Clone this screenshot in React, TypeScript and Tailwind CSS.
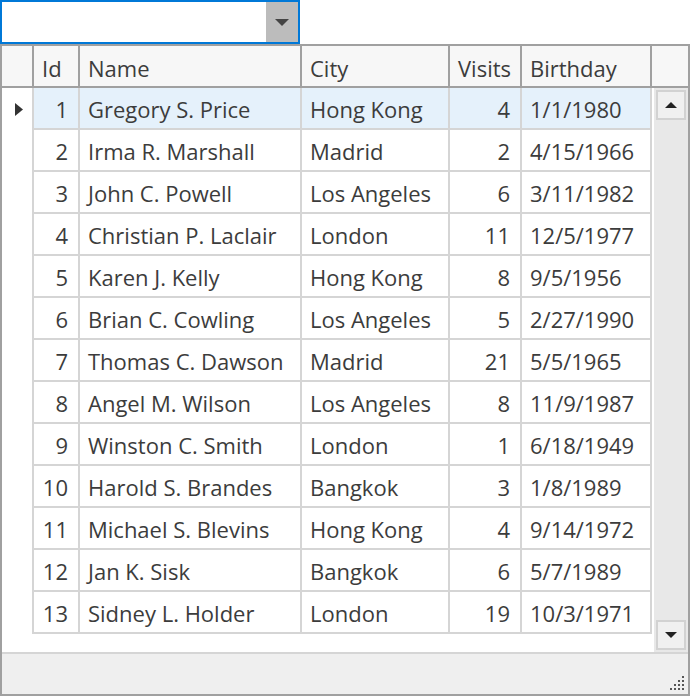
import React from 'react';

const rows = [
  { id: 1, name: 'Gregory S. Price', city: 'Hong Kong', visits: 4, birthday: '1/1/1980' },
  { id: 2, name: 'Irma R. Marshall', city: 'Madrid', visits: 2, birthday: '4/15/1966' },
  { id: 3, name: 'John C. Powell', city: 'Los Angeles', visits: 6, birthday: '3/11/1982' },
  { id: 4, name: 'Christian P. Laclair', city: 'London', visits: 11, birthday: '12/5/1977' },
  { id: 5, name: 'Karen J. Kelly', city: 'Hong Kong', visits: 8, birthday: '9/5/1956' },
  { id: 6, name: 'Brian C. Cowling', city: 'Los Angeles', visits: 5, birthday: '2/27/1990' },
  { id: 7, name: 'Thomas C. Dawson', city: 'Madrid', visits: 21, birthday: '5/5/1965' },
  { id: 8, name: 'Angel M. Wilson', city: 'Los Angeles', visits: 8, birthday: '11/9/1987' },
  { id: 9, name: 'Winston C. Smith', city: 'London', visits: 1, birthday: '6/18/1949' },
  { id: 10, name: 'Harold S. Brandes', city: 'Bangkok', visits: 3, birthday: '1/8/1989' },
  { id: 11, name: 'Michael S. Blevins', city: 'Hong Kong', visits: 4, birthday: '9/14/1972' },
  { id: 12, name: 'Jan K. Sisk', city: 'Bangkok', visits: 6, birthday: '5/7/1989' },
  { id: 13, name: 'Sidney L. Holder', city: 'London', visits: 19, birthday: '10/3/1971' },
];

const Triangle = ({ dir, className }: { dir: 'up' | 'down' | 'right'; className?: string }) => {
  if (dir === 'right')
    return (
      <svg width="8" height="13" viewBox="0 0 8 13" className={className}>
        <path d="M0 0 L8 6.5 L0 13 Z" fill="#333" />
      </svg>
    );
  return (
    <svg width="12" height="6" viewBox="0 0 12 6" className={className}>
      <path d={dir === 'up' ? 'M0 6 L6 0 L12 6 Z' : 'M0 0 L12 0 L6 6 Z'} fill="#222" />
    </svg>
  );
};

const ScrollButton = ({ dir }: { dir: 'up' | 'down' }) => (
  <div className="mx-[2px] h-[30px] border-2 border-[#d2d2d2] bg-[#f0f0f0] flex items-center justify-center">
    <Triangle dir={dir} />
  </div>
);

const App = () => {
  return (
    <div
      className="w-[690px] h-[696px] bg-white flex flex-col text-[#3c3c3c] text-[22px]"
      style={{ fontFamily: '"Open Sans", "Noto Sans", sans-serif' }}
    >
      {/* combo box */}
      <div className="w-[300px] h-[44px] border-2 border-[#0078d7] flex justify-end">
        <div className="w-[32px] bg-[#bcbcbc] flex items-center justify-center">
          <svg width="14" height="7" viewBox="0 0 14 7">
            <path d="M0 0 L14 0 L7 7 Z" fill="#444" />
          </svg>
        </div>
      </div>

      {/* grid */}
      <div className="flex-1 border-2 border-[#a0a0a0] flex flex-col min-h-0">
        {/* header */}
        <div className="h-[42px] flex bg-[#f7f7f7] border-b-2 border-[#a0a0a0] leading-none">
          <div className="w-[32px] border-r-2 border-[#a0a0a0]" />
          <div className="w-[46px] border-r-2 border-[#a0a0a0] flex items-center pl-[8px] pt-[3px]">Id</div>
          <div className="w-[222px] border-r-2 border-[#a0a0a0] flex items-center pl-[8px] pt-[3px]">Name</div>
          <div className="w-[148px] border-r-2 border-[#a0a0a0] flex items-center pl-[8px] pt-[3px]">City</div>
          <div className="w-[72px] border-r-2 border-[#a0a0a0] flex items-center pl-[8px] pt-[3px]">Visits</div>
          <div className="w-[130px] border-r-2 border-[#a0a0a0] flex items-center pl-[8px] pt-[3px]">Birthday</div>
          <div className="flex-1" />
        </div>

        {/* body */}
        <div className="flex-1 flex min-h-0">
          <div className="w-[650px] flex flex-col">
            {rows.map((r, i) => {
              const sel = i === 0;
              const cell = `h-full border-r-2 border-b-2 border-[#d5d5d5] flex items-center pt-[2px] ${sel ? 'bg-[#e5f1fb]' : ''}`;
              return (
                <div key={r.id} className="h-[42px] flex leading-none">
                  <div className="w-[32px] border-r-2 border-[#d5d5d5] flex items-center pl-[13px]">
                    {sel && <Triangle dir="right" />}
                  </div>
                  <div className={`${cell} w-[46px] justify-end pr-[10px]`}>{r.id}</div>
                  <div className={`${cell} w-[222px] pl-[8px] whitespace-nowrap`}>{r.name}</div>
                  <div className={`${cell} w-[148px] pl-[8px] whitespace-nowrap`}>{r.city}</div>
                  <div className={`${cell} w-[72px] justify-end pr-[10px]`}>{r.visits}</div>
                  <div className={`${cell} w-[130px] pl-[8px] whitespace-nowrap`}>{r.birthday}</div>
                </div>
              );
            })}
          </div>
          {/* vertical scrollbar */}
          <div className="flex-1 ml-[2px] bg-[#e8e8e8] flex flex-col justify-between py-[2px]">
            <ScrollButton dir="up" />
            <ScrollButton dir="down" />
          </div>
        </div>

        {/* bottom bar */}
        <div className="h-[42px] border-t-2 border-[#d5d5d5] bg-[#efefef] flex items-end justify-end pr-[4px] pb-[4px]">
          <svg width="14" height="14" viewBox="0 0 14 14">
            <g fill="#555">
              <rect x="12" y="0" width="2" height="2" />
              <rect x="8" y="4" width="2" height="2" />
              <rect x="12" y="4" width="2" height="2" />
              <rect x="4" y="8" width="2" height="2" />
              <rect x="8" y="8" width="2" height="2" />
              <rect x="12" y="8" width="2" height="2" />
              <rect x="0" y="12" width="2" height="2" />
              <rect x="4" y="12" width="2" height="2" />
              <rect x="8" y="12" width="2" height="2" />
              <rect x="12" y="12" width="2" height="2" />
            </g>
          </svg>
        </div>
      </div>
    </div>
  );
};

export default App;
